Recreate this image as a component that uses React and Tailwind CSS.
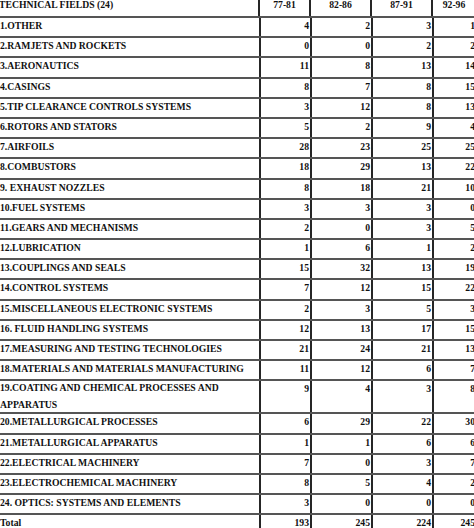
import React from 'react';

const YEARS = ['77-81', '82-86', '87-91', '92-96'];

const ROWS = [
    ['1.OTHER', 4, 2, 3, 1],
    ['2.RAMJETS AND ROCKETS', 0, 0, 2, 2],
    ['3.AERONAUTICS', 11, 8, 13, 14],
    ['4.CASINGS', 8, 7, 8, 15],
    ['5.TIP CLEARANCE CONTROLS SYSTEMS', 3, 12, 8, 13],
    ['6.ROTORS AND STATORS', 5, 2, 9, 4],
    ['7.AIRFOILS', 28, 23, 25, 25],
    ['8.COMBUSTORS', 18, 29, 13, 22],
    ['9. EXHAUST NOZZLES', 8, 18, 21, 10],
    ['10.FUEL SYSTEMS', 3, 3, 3, 0],
    ['11.GEARS AND MECHANISMS', 2, 0, 3, 5],
    ['12.LUBRICATION', 1, 6, 1, 2],
    ['13.COUPLINGS AND SEALS', 15, 32, 13, 19],
    ['14.CONTROL SYSTEMS', 7, 12, 15, 22],
    ['15.MISCELLANEOUS ELECTRONIC SYSTEMS', 2, 3, 5, 3],
    ['16. FLUID HANDLING SYSTEMS', 12, 13, 17, 15],
    ['17.MEASURING AND TESTING TECHNOLOGIES', 21, 24, 21, 13],
    ['18.MATERIALS AND MATERIALS MANUFACTURING', 11, 12, 6, 7],
    ['19.COATING AND CHEMICAL PROCESSES AND APPARATUS', 9, 4, 3, 8],
    ['20.METALLURGICAL PROCESSES', 6, 29, 22, 30],
    ['21.METALLURGICAL APPARATUS', 1, 1, 6, 6],
    ['22.ELECTRICAL MACHINERY', 7, 0, 3, 7],
    ['23.ELECTROCHEMICAL MACHINERY', 8, 5, 4, 2],
    ['24. OPTICS: SYSTEMS AND ELEMENTS', 3, 0, 0, 0],
];

const TOTAL = ['Total', 193, 245, 224, 245];

// widths of the four number columns (col 5 runs off the right edge)
const numCols = ['w-[51px]', 'w-[61px]', 'w-[61px]', 'w-[44px]'];

function Row({ cells, tall, last }) {
    const [label, ...nums] = cells;
    return (
        <div className={`flex shrink-0 overflow-hidden ${last ? '' : 'border-b-2 border-[#555]'} ${tall ? 'h-[33px]' : 'h-[20.2px]'}`}>
            <div className="w-[259px] shrink-0 pt-[1px]">
                <div className={tall ? '-mt-[2px] leading-[16.7px]' : 'leading-[13px] whitespace-nowrap'}>{label}</div>
            </div>
            {nums.map((n, i) => (
                <div key={i} className={`${numCols[i]} shrink-0 border-l-2 border-[#262626] pt-[1px] pr-[1px] text-right leading-[13px]`}>{n}</div>
            ))}
        </div>
    );
}

export default function App() {
    return (
        <div className="w-[474px] h-[528px] overflow-hidden bg-white text-[#111] font-bold text-[9.7px]" style={{ fontFamily: '"Liberation Serif", "Times New Roman", serif' }}>
            <div className="w-[476px] flex flex-col">
                <div className="flex shrink-0 h-[18px] border-b-2 border-[#555]">
                    <div className="w-[259px] shrink-0 -ml-[1px] leading-[10px]">TECHNICAL FIELDS (24)</div>
                    {YEARS.map((y, i) => (
                        <div key={y} className={`${numCols[i]} shrink-0 border-l-2 border-[#262626] text-center leading-[10px]`}>{y}</div>
                    ))}
                </div>
                {ROWS.map((r, i) => <Row key={i} cells={r} tall={i === 18} />)}
                <Row cells={TOTAL} last />
            </div>
        </div>
    );
}
